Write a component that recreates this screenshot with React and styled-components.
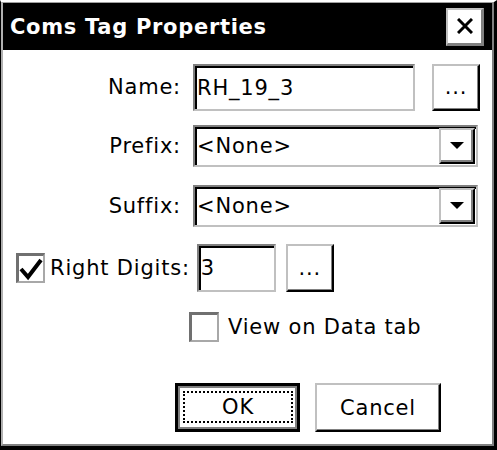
import styled, { createGlobalStyle } from "styled-components";

const GlobalStyle = createGlobalStyle`
    html, body {
        margin: 0;
        padding: 0;
        background: #fff;
    }

    body {
        font-family: "DejaVu Sans", "Liberation Sans", sans-serif;
        font-size: 21px;
        color: #000;
    }
`;

export default function App() {
    return (
        <>
            <GlobalStyle />
            <Window>
                <Frame>
                    <TitleBar>
                        <Title>Coms Tag Properties</Title>
                        <CloseButton aria-label="Close">
                            <svg width="16" height="16" viewBox="0 0 16 16">
                                <path d="M1 1 L15 15 M15 1 L1 15" stroke="#000" strokeWidth="3" fill="none" />
                            </svg>
                        </CloseButton>
                    </TitleBar>

                    <Body>
                        <Row top={0} height={48}>
                            <Label>Name:</Label>
                            <Field width={222} height={47} style={{ marginTop: 1 }}>RH_19_3</Field>
                            <RaisedButton width={48} height={47} gap={17}>...</RaisedButton>
                        </Row>

                        <Row top={14} height={42}>
                            <Label>Prefix:</Label>
                            <Combo value="<None>" />
                        </Row>

                        <Row top={18} height={42}>
                            <Label>Suffix:</Label>
                            <Combo value="<None>" />
                        </Row>

                        <Row top={17} height={48} indent={13}>
                            <CheckBox width={29} height={30}>
                                <svg width="24" height="25" viewBox="0 0 24 25">
                                    <path d="M2 13 L9 21 L22 4" stroke="#000" strokeWidth="4" fill="none" />
                                </svg>
                            </CheckBox>
                            <CheckLabel gap={5}>Right Digits:</CheckLabel>
                            <Field width={79} height={48} gap={7}>3</Field>
                            <RaisedButton width={48} height={48} gap={10}>...</RaisedButton>
                        </Row>

                        <Row top={20} height={30} indent={186}>
                            <CheckBox width={30} height={30} />
                            <CheckLabel gap={9}>View on Data tab</CheckLabel>
                        </Row>

                        <Row top={41} height={49} indent={172}>
                            <DefaultButton>
                                <FocusRing>OK</FocusRing>
                            </DefaultButton>
                            <RaisedButton width={126} height={49} gap={15}>Cancel</RaisedButton>
                        </Row>
                    </Body>
                </Frame>
            </Window>
        </>
    );
}

function Combo({ value }) {
    return (
        <ComboBox>
            <ComboText>{value}</ComboText>
            <DropButton>
                <svg width="14" height="8" viewBox="0 0 14 8">
                    <polygon points="0,0 14,0 7,7" fill="#000" />
                </svg>
            </DropButton>
        </ComboBox>
    );
}

const Window = styled.div`
    width: 497px;
    height: 450px;
    box-sizing: border-box;
    border-style: solid;
    border-width: 2px 3px 4px 1px;
    border-color: #fff #000 #000 #000;
    display: flex;
`;

const Frame = styled.div`
    flex: 1;
    display: flex;
    flex-direction: column;
    background: #fff;
    border-style: solid;
    border-width: 1px 2px 2px 2px;
    border-color: #a0a0a0 #808080 #808080 #b0b0b0;
`;

const TitleBar = styled.div`
    height: 47px;
    flex-shrink: 0;
    background: #000;
    color: #fff;
    display: flex;
    align-items: center;
    justify-content: space-between;
    padding: 0 8px 0 7px;
`;

const Title = styled.div`
    font-weight: bold;
    font-size: 21px;
    letter-spacing: 0.7px;
`;

const CloseButton = styled.div`
    width: 38px;
    height: 38px;
    box-sizing: border-box;
    background: #fff;
    border-style: solid;
    border-width: 2px 3px 3px 2px;
    border-color: #c0c0c0 #808080 #808080 #c0c0c0;
    display: flex;
    align-items: center;
    justify-content: center;
`;

const Body = styled.div`
    flex: 1;
    padding-top: 13px;
    display: flex;
    flex-direction: column;
`;

const Row = styled.div`
    display: flex;
    align-items: center;
    height: ${(p) => p.height}px;
    margin-top: ${(p) => p.top}px;
    padding-left: ${(p) => p.indent || 0}px;
    letter-spacing: 0.8px;
`;

const Label = styled.div`
    width: 178px;
    text-align: right;
    margin-right: 12px;
    flex-shrink: 0;
`;

const CheckLabel = styled.div`
    margin-left: ${(p) => p.gap}px;
    white-space: nowrap;
`;

const Field = styled.div`
    width: ${(p) => p.width}px;
    height: ${(p) => p.height}px;
    margin-left: ${(p) => p.gap || 0}px;
    box-sizing: border-box;
    border-style: solid;
    border-width: 2px;
    border-color: #808080 #c0c0c0 #c0c0c0 #808080;
    box-shadow: inset 2px 2px 0 #000;
    padding-left: 2px;
    display: flex;
    align-items: center;
    flex-shrink: 0;
`;

const ComboBox = styled(Field).attrs({ width: 285, height: 42 })`
    padding-right: 1px;
`;

const ComboText = styled.div`
    flex: 1;
`;

const DropButton = styled.div`
    width: 36px;
    height: 36px;
    box-sizing: border-box;
    background: #fff;
    border-style: solid;
    border-width: 2px;
    border-color: #c0c0c0 #000 #000 #c0c0c0;
    box-shadow: inset -2px -2px 0 #808080;
    display: flex;
    align-items: center;
    justify-content: center;
`;

const RaisedButton = styled.div`
    width: ${(p) => p.width}px;
    height: ${(p) => p.height}px;
    margin-left: ${(p) => p.gap || 0}px;
    box-sizing: border-box;
    background: #fff;
    border-style: solid;
    border-width: 2px;
    border-color: #c0c0c0 #000 #000 #c0c0c0;
    box-shadow: inset -1px -1px 0 #808080;
    display: flex;
    align-items: center;
    justify-content: center;
    flex-shrink: 0;
`;

const DefaultButton = styled.div`
    width: 125px;
    height: 49px;
    box-sizing: border-box;
    background: #fff;
    border: 3px solid #000;
    box-shadow: inset 0 0 0 2px #808080;
    padding: 5px 4px 6px 5px;
    display: flex;
`;

const FocusRing = styled.div`
    flex: 1;
    border: 2px dotted #000;
    display: flex;
    align-items: center;
    justify-content: center;
`;

const CheckBox = styled.div`
    width: ${(p) => p.width}px;
    height: ${(p) => p.height}px;
    box-sizing: border-box;
    border-style: solid;
    border-width: 3px 2px 2px 3px;
    border-color: #707070 #a8a8a8 #a8a8a8 #707070;
    background: #fff;
    display: flex;
    align-items: center;
    justify-content: center;
    flex-shrink: 0;
`;
